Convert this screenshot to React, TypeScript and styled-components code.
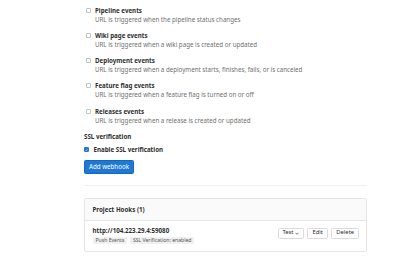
import React from "react";
import styled, { createGlobalStyle } from "styled-components";

const Global = createGlobalStyle`
  html, body { margin: 0; padding: 0; background: #fff; }
  body { font-family: "Noto Sans", "DejaVu Sans", sans-serif; color: #2e2e2e; }
  * { box-sizing: border-box; }
`;

const Page = styled.div`
  width: 420px;
  height: 265px;
  overflow: hidden;
  padding: 5.5px 53px 0 84px;
`;

const EventList = styled.div`
  display: flex;
  flex-direction: column;
  gap: 7.3px;
  padding-left: 1.5px;
`;

const EventItem = styled.div`
  display: grid;
  grid-template-columns: 9.5px 1fr;
`;

const Box = styled.span<{ $checked?: boolean }>`
  width: 5px;
  height: 5px;
  margin-top: 2px;
  border-radius: 1px;
  border: 1px solid ${(p) => (p.$checked ? "#1f78d1" : "#c2c2c2")};
  background: ${(p) => (p.$checked ? "#1f78d1" : "#fff")};
  display: flex;
  align-items: center;
  justify-content: center;
`;

const Title = styled.div`
  font-size: 6.2px;
  font-weight: 700;
  line-height: 9px;
  color: #2e2e2e;
`;

const Desc = styled.div`
  font-size: 6.2px;
  line-height: 9px;
  color: #707070;
`;

const Heading = styled.div`
  margin-top: 7px;
  font-size: 6.2px;
  font-weight: 700;
  line-height: 9px;
`;

const CheckRow = styled.div`
  margin-top: 4.5px;
  display: grid;
  grid-template-columns: 9.5px 1fr;
`;

const PrimaryButton = styled.button`
  display: block;
  margin-top: 6px;
  height: 14px;
  width: 50px;
  padding: 0;
  border: 0.6px solid #1068bf;
  border-radius: 1.5px;
  background: #1f78d1;
  color: #fff;
  font-family: inherit;
  font-size: 6.2px;
  line-height: 1;
`;

const Divider = styled.hr`
  margin: 11px 0 0;
  border: 0;
  border-top: 0.6px solid #f0f0f0;
`;

const Panel = styled.div`
  margin-top: 11.4px;
  border: 0.6px solid #e5e5e5;
  border-radius: 2px;
`;

const PanelHeader = styled.div`
  height: 22px;
  display: flex;
  align-items: center;
  padding-left: 7.5px;
  background: #fafafa;
  border-bottom: 0.6px solid #e5e5e5;
  font-size: 6.2px;
  font-weight: 700;
`;

const HookRow = styled.div`
  height: 30.5px;
  display: flex;
  align-items: flex-start;
  justify-content: space-between;
  padding: 5.5px 7px 0 7.5px;
`;

const HookUrl = styled.div`
  font-size: 6.2px;
  font-weight: 700;
  line-height: 9px;
`;

const Badges = styled.div`
  display: flex;
  gap: 2.5px;
  margin-top: 1.5px;
`;

const Badge = styled.span`
  height: 7.5px;
  padding: 0 3px;
  background: #f0f0f0;
  border-radius: 1px;
  color: #555;
  font-size: 5.1px;
  line-height: 7.5px;
`;

const Actions = styled.div`
  display: flex;
  gap: 3.5px;
  margin-top: 1.5px;
`;

const SmallButton = styled.button`
  height: 11.5px;
  padding: 0 4px;
  border: 0.6px solid #dbdbdb;
  border-radius: 1.5px;
  background: #fff;
  color: #2e2e2e;
  font-family: inherit;
  font-size: 5.8px;
  line-height: 1;
  display: flex;
  align-items: center;
  gap: 1.5px;
`;

const events = [
  ["Pipeline events", "URL is triggered when the pipeline status changes"],
  ["Wiki page events", "URL is triggered when a wiki page is created or updated"],
  ["Deployment events", "URL is triggered when a deployment starts, finishes, fails, or is canceled"],
  ["Feature flag events", "URL is triggered when a feature flag is turned on or off"],
  ["Releases events", "URL is triggered when a release is created or updated"],
];

export default function App() {
  return (
    <>
      <Global />
      <Page>
        <EventList>
          {events.map(([t, d]) => (
            <EventItem key={t}>
              <Box />
              <div>
                <Title>{t}</Title>
                <Desc>{d}</Desc>
              </div>
            </EventItem>
          ))}
        </EventList>
        <Heading>SSL verification</Heading>
        <CheckRow>
          <Box $checked>
            <svg width="4" height="4" viewBox="0 0 10 10">
              <path d="M2 5.2 L4.2 7.4 L8.2 2.8" fill="none" stroke="#fff" strokeWidth="1.8" />
            </svg>
          </Box>
          <Title>Enable SSL verification</Title>
        </CheckRow>
        <PrimaryButton>Add webhook</PrimaryButton>
        <Divider />
        <Panel>
          <PanelHeader>Project Hooks (1)</PanelHeader>
          <HookRow>
            <div>
              <HookUrl>http://104.223.29.4:59080</HookUrl>
              <Badges>
                <Badge>Push Events</Badge>
                <Badge>SSL Verification: enabled</Badge>
              </Badges>
            </div>
            <Actions>
              <SmallButton>
                Test
                <svg width="4" height="3" viewBox="0 0 8 6">
                  <path d="M1 1.5 L4 4.5 L7 1.5" fill="none" stroke="#2e2e2e" strokeWidth="1.3" />
                </svg>
              </SmallButton>
              <SmallButton>Edit</SmallButton>
              <SmallButton>Delete</SmallButton>
            </Actions>
          </HookRow>
        </Panel>
      </Page>
    </>
  );
}
